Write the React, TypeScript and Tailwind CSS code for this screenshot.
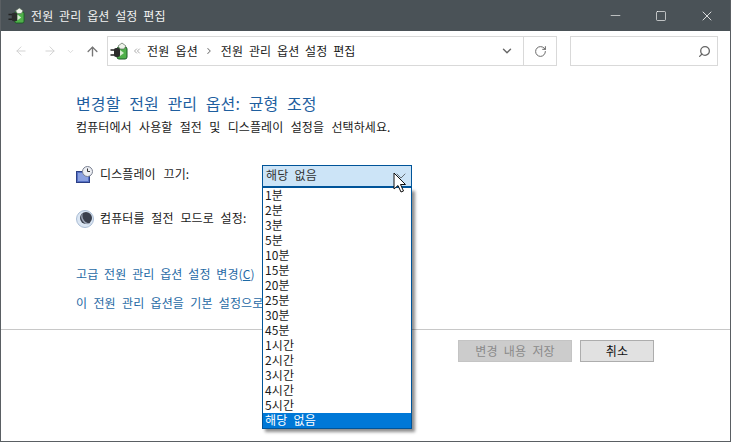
import { ArrowLeft, ArrowRight, ArrowUp, ChevronDown, ChevronRight, ChevronsLeft, Minus, RotateCw, Search, Square, X } from 'lucide-react';

const FONT = "font-['Noto_Sans_CJK_KR','Noto_Sans',sans-serif]";

const TIMES = ['1분', '2분', '3분', '5분', '10분', '15분', '20분', '25분', '30분', '45분', '1시간', '2시간', '3시간', '4시간', '5시간'];

function PowerIcon({ size = 18 }: { size?: number }) {
    return (
        <svg width={size} height={size} viewBox="0 0 18 18" className="shrink-0">
            <rect x="7" y="5" width="10" height="12" rx="2" fill="#4fb04a" stroke="#1c5a26" />
            <path d="M8 4 L12 1 L16 4 L14 7 H10 Z" fill="#eef3ea" stroke="#5a6a5a" strokeWidth="0.7" />
            <path d="M0.5 8 H6 M0.5 13 H6" stroke="#222" strokeWidth="1.6" />
            <rect x="4" y="6" width="6" height="9" rx="2" fill="#2b2b2b" />
            <path d="M10 8 L14 11 L10 14 Z" fill="#d7ecd2" />
        </svg>
    );
}

function DisplayIcon() {
    return (
        <svg width="18" height="18" viewBox="0 0 18 18" className="shrink-0">
            <rect x="0.5" y="5.5" width="13" height="11" fill="#5570c4" stroke="#2c3f85" />
            <rect x="2" y="7" width="10" height="8" fill="#8aa0e0" />
            <circle cx="11.5" cy="5.5" r="5" fill="#eceef3" stroke="#7a8090" />
            <path d="M11.5 2.5 V5.5 H14" fill="none" stroke="#333" strokeWidth="1" />
        </svg>
    );
}

function MoonIcon() {
    return (
        <svg width="18" height="18" viewBox="0 0 18 18" className="shrink-0">
            <circle cx="9" cy="9" r="8.5" fill="#dbe6f3" stroke="#a9bcd4" />
            <circle cx="10" cy="8" r="6" fill="#3a3f4c" />
            <path d="M7 2.5 A7 7 0 0 0 15 13.5 A8 8 0 0 1 7 2.5 Z" fill="#9aa3b4" />
        </svg>
    );
}

export default function App() {
    return (
        <div className={`${FONT} relative w-[731px] h-[442px] overflow-hidden bg-white flex flex-col border-x border-b border-[#5a5f63] [word-spacing:3.5px] tracking-[0.1px]`}>
            {/* Title bar */}
            <div className="h-[31px] shrink-0 bg-[#4a5257] flex items-center text-white">
                <div className="ml-[7px]"><PowerIcon size={17} /></div>
                <span className="ml-[6px] text-[12px] leading-none text-[#f2f2f2] [word-spacing:3px]">전원 관리 옵션 설정 편집</span>
                <div className="ml-auto flex items-center">
                    <div className="w-[46px] flex justify-center"><Minus size={15} strokeWidth={1} /></div>
                    <div className="w-[46px] flex justify-center"><Square size={12} strokeWidth={1.3} /></div>
                    <div className="w-[46px] flex justify-center"><X size={16} strokeWidth={1.2} /></div>
                </div>
            </div>

            {/* Nav row */}
            <div className="h-[30px] mt-[5px] shrink-0 flex items-stretch">
                <div className="w-[106px] flex items-center pl-[13px] text-[#d0d0d0]">
                    <ArrowLeft size={14} strokeWidth={1.6} />
                    <ArrowRight size={14} strokeWidth={1.6} className="ml-[15px]" />
                    <ChevronDown size={9} strokeWidth={2} className="ml-[9px]" />
                    <ArrowUp size={15} strokeWidth={2.2} className="ml-[10px] text-[#777]" />
                </div>
                <div className="w-[450px] border border-[#d9d9d9] flex items-center">
                    <div className="ml-[2px]"><PowerIcon size={18} /></div>
                    <ChevronsLeft size={10} strokeWidth={1.5} className="ml-[4px] text-[#777]" />
                    <span className="ml-[5px] text-[12px] text-[#1a1a1a]">전원 옵션</span>
                    <ChevronRight size={10} strokeWidth={2.5} className="ml-[6px] text-[#777]" />
                    <span className="ml-[7px] text-[12px] text-[#1a1a1a] [word-spacing:3px]">전원 관리 옵션 설정 편집</span>
                    <div className="ml-auto w-[33px] flex justify-center"><ChevronDown size={14} strokeWidth={2.4} className="text-[#666]" /></div>
                    <div className="w-[33px] h-full border-l border-[#d9d9d9] flex items-center justify-center">
                        <RotateCw size={13} strokeWidth={1.8} className="text-[#666]" />
                    </div>
                </div>
                <div className="w-[148px] ml-[13px] border border-[#d9d9d9] flex items-center justify-end pr-[6px]">
                    <Search size={13} strokeWidth={2.4} className="text-[#666] -scale-x-100" />
                </div>
            </div>

            {/* Body */}
            <div className="pl-[75px] pt-[25px]">
                <h1 className="text-[16px] leading-[24px] text-[#1f5f9f] font-normal [word-spacing:5px]">변경할 전원 관리 옵션: 균형 조정</h1>
                <p className="text-[12px] leading-[18px] mt-[3px] text-[#1a1a1a] [word-spacing:4.5px]">컴퓨터에서 사용할 절전 및 디스플레이 설정을 선택하세요.</p>

                <div className="mt-[28px] flex items-center h-[22px] text-[12px] text-[#1a1a1a]">
                    <div className="w-[24px]"><DisplayIcon /></div>
                    <span className="-translate-y-px [word-spacing:5px]">디스플레이 끄기:</span>
                </div>
                <div className="mt-[22px] flex items-center h-[22px] text-[12px] text-[#1a1a1a]">
                    <div className="w-[24px]"><MoonIcon /></div>
                    <span className="-translate-y-px [word-spacing:4px]">컴퓨터를 절전 모드로 설정:</span>
                </div>

                <div className="mt-[35px] text-[12px] leading-[18px] text-[#1f6aa5] [word-spacing:3px]">고급 전원 관리 옵션 설정 변경(<span className="underline">C</span>)</div>
                <div className="mt-[11px] text-[12px] leading-[18px] text-[#1f6aa5]">이 전원 관리 옵션을 기본 설정으로 복원</div>
            </div>

            {/* Footer */}
            <div className="mt-[17px] border-t border-[#c8c8c8] flex justify-end pr-[76px] pt-[10px] gap-[8px]">
                <div className="w-[114px] h-[22px] bg-[#cccccc] border border-[#c4c4c4] flex items-center justify-center text-[12px] text-[#8a8a8a]">변경 내용 저장</div>
                <div className="w-[74px] h-[22px] bg-[#e1e1e1] border border-[#adadad] flex items-center justify-center text-[12px] text-[#111]">취소</div>
            </div>

            {/* Open dropdown */}
            <div className="absolute left-[261px] top-[165px] w-[150px]">
                <div className="h-[23px] bg-[#cce4f7] border border-[#005499] border-b-2 flex items-center pl-[3px] pr-[2px] text-[12px] text-[#333]">
                    <span className="-translate-y-px">해당 없음</span>
                    <ChevronDown size={16} strokeWidth={1} className="ml-auto text-[#333]" />
                </div>
                <div className="bg-white border-x border-b border-[#005499] shadow-[3px_3px_3px_rgba(0,0,0,0.45)]">
                    {TIMES.map((t) => (
                        <div key={t} className="h-[15px] pl-[2px] text-[12px] leading-[14px] text-[#1a1a1a]">{t}</div>
                    ))}
                    <div className="h-[15px] pl-[2px] bg-[#0078d7] text-[12px] leading-[14px] text-white">해당 없음</div>
                </div>
            </div>

            {/* Mouse cursor */}
            <svg width="14" height="22" viewBox="0 0 14 22" className="absolute left-[392px] top-[172px]">
                <path d="M1 1 V17 L5 13.5 L8 20 L10.5 19 L7.5 12.5 H12.5 Z" fill="#fff" stroke="#111" strokeWidth="1" />
            </svg>
        </div>
    );
}
